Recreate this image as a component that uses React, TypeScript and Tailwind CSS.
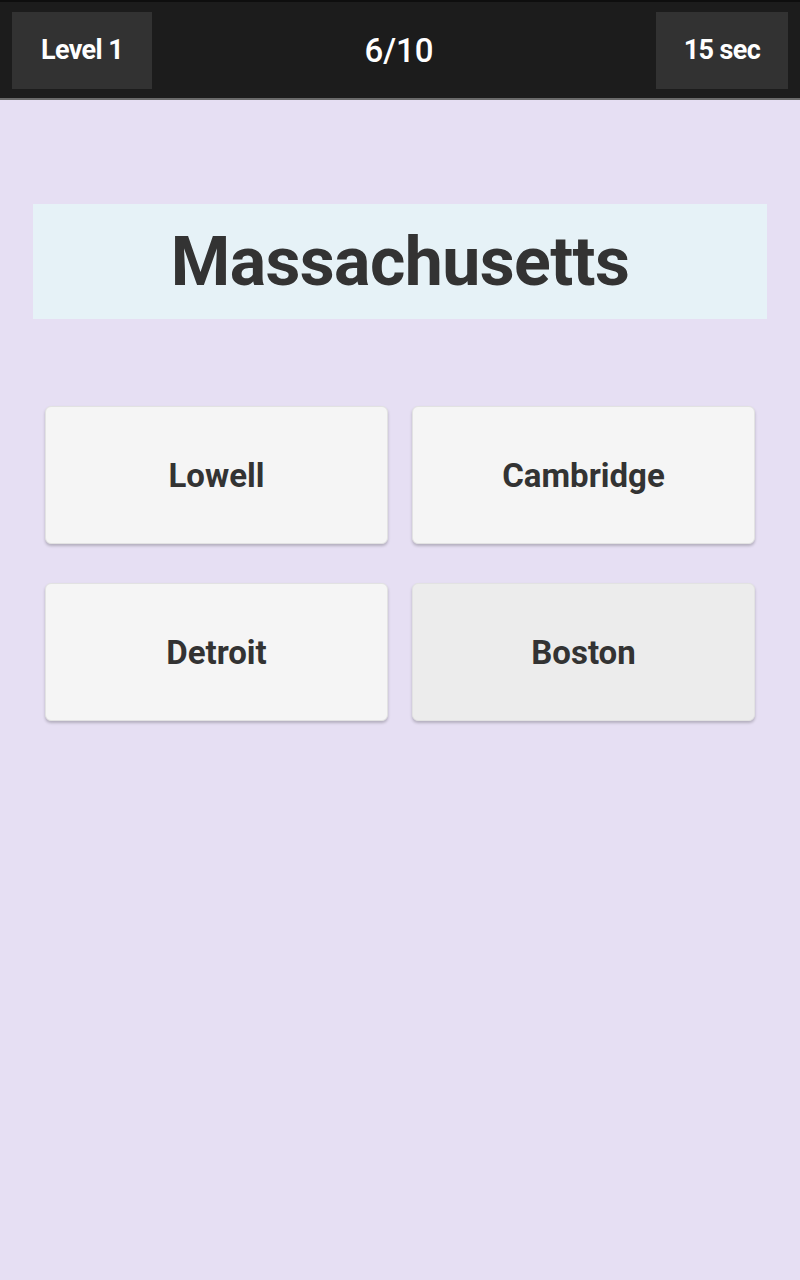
import React from "react";

const Btn = ({ label, pressed }: { label: string; pressed?: boolean }) => (
  <div
    className={`h-[138px] rounded-[6px] flex items-center justify-center shadow-[0_2px_3px_rgba(0,0,0,0.22)] border border-[#e2e2e2] ${
      pressed ? "bg-[#ececec]" : "bg-[#f5f5f5]"
    }`}
  >
    <span className="text-[33px] font-bold text-[#333333] tracking-[0px] pt-[2px]">{label}</span>
  </div>
);

export default function App() {
  return (
    <div
      className="w-[800px] h-[1280px] bg-[#e6dff3] flex flex-col"
      style={{ fontFamily: "Roboto, 'Noto Sans', sans-serif" }}
    >
      <div className="h-[100px] bg-[#1c1c1c] border-t-2 border-[#0e0e0e] border-b-2 border-b-[#6a6a6a] grid grid-cols-[140px_1fr_132px] items-center px-[12px]">
        <div className="w-[140px] h-[77px] bg-[#323232] flex items-center justify-center">
          <span className="text-white text-[27px] font-bold tracking-[-0.6px]">Level 1</span>
        </div>
        <span className="text-white text-[33px] font-medium tracking-[0px] text-center pr-[10px] pt-[2px]">6/10</span>
        <div className="w-[132px] h-[77px] bg-[#323232] flex items-center justify-center">
          <span className="text-white text-[27px] font-bold tracking-[-0.6px]">15 sec</span>
        </div>
      </div>
      <div className="mt-[104px] mx-[33px] h-[115px] bg-[#e6f2f7] flex items-center justify-center">
        <span className="text-[68px] font-bold text-[#333333] tracking-[-0.6px]">Massachusetts</span>
      </div>
      <div className="mt-[87px] mx-[45px] grid grid-cols-2 gap-x-[24px] gap-y-[39px]">
        <Btn label="Lowell" />
        <Btn label="Cambridge" />
        <Btn label="Detroit" />
        <Btn label="Boston" pressed />
      </div>
    </div>
  );
}
